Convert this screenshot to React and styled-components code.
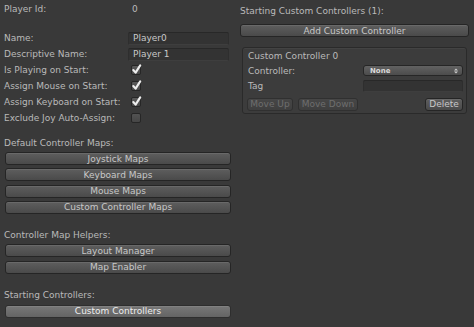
import styled, { createGlobalStyle, css } from "styled-components";

const GlobalStyle = createGlobalStyle`
    html, body {
        margin: 0;
        padding: 0;
        background: #393939;
    }
    body {
        font-family: "DejaVu Sans", "Liberation Sans", sans-serif;
        font-size: 9px;
        color: #bababa;
    }
`;

const Page = styled.div`
    display: flex;
    width: 474px;
    height: 327px;
    overflow: hidden;
    background: #393939;
`;

const LeftCol = styled.div`
    width: 237px;
    box-sizing: border-box;
    padding: 1px 6px 0 4px;
    display: flex;
    flex-direction: column;
`;

const RightCol = styled.div`
    flex: 1;
    box-sizing: border-box;
    padding: 4px 5px 0 3px;
    display: flex;
    flex-direction: column;
`;

const Row = styled.div`
    display: flex;
    align-items: center;
    height: ${({ $h }) => $h || 16}px;
    margin-top: ${({ $mt }) => $mt || 0}px;
`;

const Label = styled.div`
    width: ${({ $w }) => $w || 124}px;
    flex-shrink: 0;
    white-space: nowrap;
`;

const Value = styled.div`
    padding-left: 4px;
`;

const Field = styled.div`
    flex: 1;
    height: ${({ $h }) => $h || 13}px;
    box-sizing: border-box;
    margin-right: ${({ $mr }) => $mr || 0}px;
    padding-left: 4px;
    display: flex;
    align-items: center;
    background: #333333;
    border-top: 1px solid #282828;
    border-left: 1px solid #2e2e2e;
    border-right: 1px solid #2e2e2e;
    border-bottom: 1px solid #3e3e3e;
    border-radius: 2px;
    color: #c8c8c8;
`;

const CheckBox = styled.div`
    width: 10px;
    height: 10px;
    margin-left: 3px;
    box-sizing: border-box;
    border-radius: 2px;
    border: 1px solid #262626;
    background: ${({ $on }) => ($on ? "linear-gradient(#5a5a5a, #4a4a4a)" : "linear-gradient(#525252, #464646)")};
    position: relative;
    svg {
        position: absolute;
        left: -1px;
        top: -2px;
    }
`;

const SectionLabel = styled.div`
    height: 14px;
    line-height: 14px;
    margin-top: ${({ $mt }) => $mt || 0}px;
    margin-bottom: ${({ $mb }) => $mb || 2}px;
    white-space: nowrap;
`;

const ButtonStack = styled.div`
    display: flex;
    flex-direction: column;
    gap: 3.3px;
    padding-left: 1px;
`;

const Button = styled.div`
    height: 13px;
    box-sizing: border-box;
    display: flex;
    align-items: center;
    justify-content: center;
    border-radius: 3px;
    border: 1px solid #252525;
    background: linear-gradient(#5e5e5e, #4a4a4a);
    box-shadow: inset 0 1px 0 rgba(255, 255, 255, 0.08);
    color: #c8c8c8;
    white-space: nowrap;
    width: ${({ $w }) => ($w ? `${$w}px` : "auto")};
    ${({ $active }) =>
        $active &&
        css`
            background: linear-gradient(#787878, #646464);
            color: #eeeeee;
            border-color: #2e2e2e;
        `}
    ${({ $disabled }) =>
        $disabled &&
        css`
            background: linear-gradient(#464646, #3f3f3f);
            color: #6e6e6e;
            border-color: #303030;
            box-shadow: none;
        `}
`;

const Panel = styled.div`
    margin: 10px 2px 0 2px;
    border: 1px solid #2a2a2a;
    border-radius: 3px;
    background: #3c3c3c;
    padding: 0 3px 2px 4px;
    box-shadow: inset 0 1px 0 rgba(255, 255, 255, 0.04);
`;

const PanelRow = styled.div`
    display: flex;
    align-items: center;
    height: 15px;
    padding-left: ${({ $pl }) => $pl || 0}px;
`;

const Dropdown = styled.div`
    flex: 1;
    height: 11px;
    box-sizing: border-box;
    display: flex;
    align-items: center;
    justify-content: space-between;
    padding: 0 4px 0 6px;
    border-radius: 3px;
    border: 1px solid #262626;
    background: linear-gradient(#626262, #4c4c4c);
    color: #dadada;
    font-size: 7px;
    font-weight: bold;
`;

const ButtonRow = styled.div`
    display: flex;
    align-items: center;
    gap: 5px;
    margin-top: 4.5px;
`;

const Spacer = styled.div`
    flex: 1;
`;

const Check = () => (
    <svg width="11" height="11" viewBox="0 0 11 11">
        <path d="M2.3 6 L4.6 8.6 L9.2 1.4" fill="none" stroke="#eeeeee" strokeWidth="2.1" strokeLinecap="round" strokeLinejoin="round" />
    </svg>
);

const UpDown = () => (
    <svg width="4" height="6" viewBox="0 0 4 6">
        <path d="M0 2.4 L2 0.4 L4 2.4 Z M0 3.6 L2 5.6 L4 3.6 Z" fill="#cfcfcf" />
    </svg>
);

const toggles = [
    { label: "Is Playing on Start:", on: true },
    { label: "Assign Mouse on Start:", on: true },
    { label: "Assign Keyboard on Start:", on: true },
    { label: "Exclude Joy Auto-Assign:", on: false },
];

const mapButtons = ["Joystick Maps", "Keyboard Maps", "Mouse Maps", "Custom Controller Maps"];
const helperButtons = ["Layout Manager", "Map Enabler"];

export default function App() {
    return (
        <>
            <GlobalStyle />
            <Page>
                <LeftCol>
                    <Row>
                        <Label>Player Id:</Label>
                        <Value>0</Value>
                    </Row>
                    <Row $mt={13}>
                        <Label>Name:</Label>
                        <Field $mr={2}>Player0</Field>
                    </Row>
                    <Row>
                        <Label>Descriptive Name:</Label>
                        <Field $mr={2}>Player 1</Field>
                    </Row>
                    {toggles.map((t) => (
                        <Row key={t.label}>
                            <Label>{t.label}</Label>
                            <CheckBox $on={t.on}>{t.on && <Check />}</CheckBox>
                        </Row>
                    ))}

                    <SectionLabel $mt={10}>Default Controller Maps:</SectionLabel>
                    <ButtonStack>
                        {mapButtons.map((b) => (
                            <Button key={b}>{b}</Button>
                        ))}
                    </ButtonStack>

                    <SectionLabel $mt={14.5}>Controller Map Helpers:</SectionLabel>
                    <ButtonStack>
                        {helperButtons.map((b) => (
                            <Button key={b}>{b}</Button>
                        ))}
                    </ButtonStack>

                    <SectionLabel $mt={14.7} $mb={2.5}>Starting Controllers:</SectionLabel>
                    <ButtonStack>
                        <Button $active>Custom Controllers</Button>
                    </ButtonStack>
                </LeftCol>

                <RightCol>
                    <SectionLabel $mb={6}>Starting Custom Controllers (1):</SectionLabel>
                    <Button>Add Custom Controller</Button>
                    <Panel>
                        <PanelRow $pl={1}>Custom Controller 0</PanelRow>
                        <PanelRow $pl={1}>
                            <Label $w={115}>Controller:</Label>
                            <Dropdown>
                                None
                                <UpDown />
                            </Dropdown>
                        </PanelRow>
                        <PanelRow $pl={1}>
                            <Label $w={115}>Tag</Label>
                            <Field $h={12} />
                        </PanelRow>
                        <ButtonRow>
                            <Button $disabled $w={46}>Move Up</Button>
                            <Button $disabled $w={60}>Move Down</Button>
                            <Spacer />
                            <Button $w={38}>Delete</Button>
                        </ButtonRow>
                    </Panel>
                </RightCol>
            </Page>
        </>
    );
}
